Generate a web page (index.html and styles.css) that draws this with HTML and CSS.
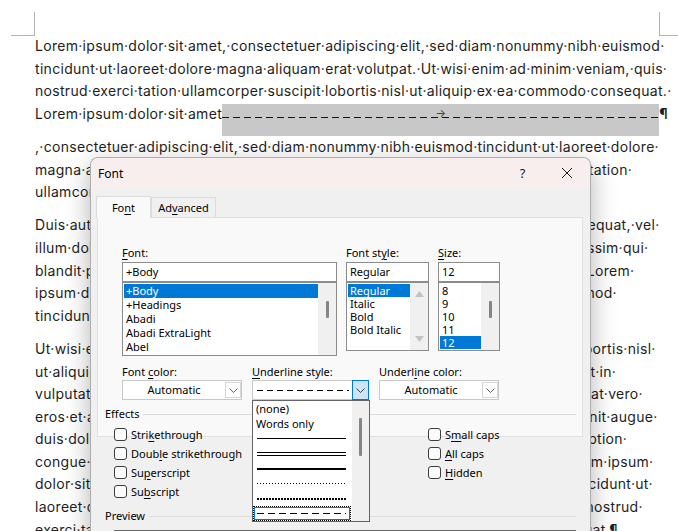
FILE: index.html
```html
<!DOCTYPE html>
<html>
<head>
<meta charset="utf-8">
<link rel="stylesheet" href="styles.css">
</head>
<body>
<div class="marks"><div class="mark-l"></div><div class="mark-r"></div></div>
<div class="doc">
  <p>
    <span class="ln">Lorem·ipsum·dolor·sit·amet,·consectetuer·adipiscing·elit,·sed·diam·nonummy·nibh·euismod·</span>
    <span class="ln">tincidunt·ut·laoreet·dolore·magna·aliquam·erat·volutpat.·Ut·wisi·enim·ad·minim·veniam,·quis·</span>
    <span class="ln">nostrud·exerci·tation·ullamcorper·suscipit·lobortis·nisl·ut·aliquip·ex·ea·commodo·consequat.·</span>
    <span class="ln ln-tab"><span>Lorem·ipsum·dolor·sit·amet</span><span class="tabchar">→</span><span class="pil">¶</span></span>
  </p>
  <p>
    <span class="ln">,·consectetuer·adipiscing·elit,·sed·diam·nonummy·nibh·euismod·tincidunt·ut·laoreet·dolore·</span>
    <span class="ln">magna·aliquam·erat·volutpat.·Ut·wisi·enim·ad·minim·veniam,·quis·nostrud·exerci·tation·</span>
    <span class="ln">ullamcorper·suscipit·lobortis·nisl·ut·aliquip·ex·ea·commodo·consequat.¶</span>
  </p>
  <p>
    <span class="ln">Duis·autem·vel·eum·iriure·dolor·in·hendrerit·in·vulputate·velit·esse·molestie·consequat,·vel·</span>
    <span class="ln">illum·dolore·eu·feugiat·nulla·facilisis·at·vero·eros·et·accumsan·et·iusto·odio·dignissim·qui·</span>
    <span class="ln">blandit·praesent·luptatum·zzril·delenit·augue·duis·dolore·te·feugait·nulla·facilisi.·Lorem·</span>
    <span class="ln">ipsum·dolor·sit·amet,·consectetuer·adipiscing·elit,·sed·diam·nonummy·nibh·euismod·</span>
    <span class="ln">tincidunt·ut·laoreet·dolore·magna·aliquam·erat·volutpat.¶</span>
  </p>
  <p>
    <span class="ln">Ut·wisi·enim·ad·minim·veniam,·quis·nostrud·exerci·tation·ullamcorper·suscipit·lobortis·nisl·</span>
    <span class="ln">ut·aliquip·ex·ea·commodo·consequat.·Duis·autem·vel·eum·iriure·dolor·in·hendrerit·in·</span>
    <span class="ln">vulputate·velit·esse·molestie·consequat,·vel·illum·dolore·eu·feugiat·nulla·facilisis·at·vero·</span>
    <span class="ln">eros·et·accumsan·et·iusto·odio·dignissim·qui·blandit·praesent·luptatum·zzril·delenit·augue·</span>
    <span class="ln">duis·dolore·te·feugait·nulla·facilisi.·Nam·liber·tempor·cum·soluta·nobis·eleifend·option·</span>
    <span class="ln">congue·nihil·imperdiet·doming·id·quod·mazim·placerat·facer·possim·assum.·Lorem·ipsum·</span>
    <span class="ln">dolor·sit·amet,·consectetuer·adipiscing·elit,·sed·diam·nonummy·nibh·euismod·tincidunt·ut·</span>
    <span class="ln">laoreet·dolore·magna·aliquam·erat·volutpat.·Ut·wisi·enim·ad·minim·veniam,·quis·nostrud·</span>
    <span class="ln">exerci·tation·ullamcorper·suscipit·lobortis·nisl·ut·aliquip·ex·ea·commodo·consequat.¶</span>
  </p>
</div>

<div class="dialog">
  <div class="titlebar">
    <span class="title">Font</span>
    <span class="cap help">?</span>
    <span class="cap close"><svg width="10" height="10" viewBox="0 0 10 10"><path d="M0 0L10 10M10 0L0 10" stroke="#1a1a1a" stroke-width="1" fill="none"/></svg></span>
  </div>
  <div class="tabstrip">
    <div class="tabbtn active">Fo<u>n</u>t</div>
    <div class="tabbtn adv">Ad<u>v</u>anced</div>
  </div>
  <div class="panel">
    <div class="row1">
      <div class="field w-font">
        <div class="lbl"><u>F</u>ont:</div>
        <div class="input">+Body</div>
        <div class="list h-font">
          <div class="items r14">
            <div class="it sel">+Body</div>
            <div class="it">+Headings</div>
            <div class="it">Abadi</div>
            <div class="it">Abadi ExtraLight</div>
            <div class="it">Abel</div>
          </div>
          <div class="sb"><div class="thumb"></div></div>
        </div>
      </div>
      <div class="field w-style">
        <div class="lbl">Font st<u>y</u>le:</div>
        <div class="input">Regular</div>
        <div class="list h-small">
          <div class="items r13">
            <div class="it sel">Regular</div>
            <div class="it">Italic</div>
            <div class="it">Bold</div>
            <div class="it">Bold Italic</div>
          </div>
          <div class="sb sb-arrows">
            <svg width="9" height="6" viewBox="0 0 9 6"><path d="M0 6L4.5 0L9 6Z" fill="#c2c2c2"/></svg>
            <svg width="9" height="6" viewBox="0 0 9 6"><path d="M0 0L4.5 6L9 0Z" fill="#c2c2c2"/></svg>
          </div>
        </div>
      </div>
      <div class="field w-size">
        <div class="lbl"><u>S</u>ize:</div>
        <div class="input">12</div>
        <div class="list h-small">
          <div class="items r13">
            <div class="it">8</div>
            <div class="it">9</div>
            <div class="it">10</div>
            <div class="it">11</div>
            <div class="it sel">12</div>
          </div>
          <div class="sb"><div class="thumb"></div></div>
        </div>
      </div>
    </div>

    <div class="row2">
      <div class="field w-color">
        <div class="lbl">Font <u>c</u>olor:</div>
        <div class="combo">
          <span class="combo-val">Automatic</span>
          <span class="arrow"><svg width="9" height="5" viewBox="0 0 9 5"><path d="M.5.5L4.5 4.5L8.5.5" fill="none" stroke="#606060"/></svg></span>
        </div>
      </div>
      <div class="field w-ustyle">
        <div class="lbl"><u>U</u>nderline style:</div>
        <div class="combo">
          <span class="combo-val"><span class="dash-sample"></span></span>
          <span class="arrow open"><svg width="9" height="5" viewBox="0 0 9 5"><path d="M.5.5L4.5 4.5L8.5.5" fill="none" stroke="#404040"/></svg></span>
        </div>
      </div>
      <div class="field w-color">
        <div class="lbl">Underl<u>i</u>ne color:</div>
        <div class="combo">
          <span class="combo-val">Automatic</span>
          <span class="arrow"><svg width="9" height="5" viewBox="0 0 9 5"><path d="M.5.5L4.5 4.5L8.5.5" fill="none" stroke="#606060"/></svg></span>
        </div>
      </div>
    </div>

    <div class="group"><span>Effects</span><span class="rule"></span></div>
    <div class="effects">
      <label class="chk"><span class="box"></span>Stri<u>k</u>ethrough</label>
      <label class="chk"><span class="box"></span>S<u>m</u>all caps</label>
      <label class="chk"><span class="box"></span>Doub<u>l</u>e strikethrough</label>
      <label class="chk"><span class="box"></span><u>A</u>ll caps</label>
      <label class="chk"><span class="box"></span>Su<u>p</u>erscript</label>
      <label class="chk"><span class="box"></span><u>H</u>idden</label>
      <label class="chk"><span class="box"></span>Su<u>b</u>script</label>
    </div>
    <div class="group g-prev"><span>Preview</span><span class="rule"></span></div>
    <div class="preview"></div>
  </div>

  <div class="droplist">
    <div class="dl-items">
      <div class="dl-it">(none)</div>
      <div class="dl-it">Words only</div>
      <div class="dl-it"><span class="smp solid"></span></div>
      <div class="dl-it"><span class="smp double"></span></div>
      <div class="dl-it"><span class="smp thick"></span></div>
      <div class="dl-it"><span class="smp dotted"></span></div>
      <div class="dl-it"><span class="smp bdotted"></span></div>
      <div class="dl-it cur"><span class="smp dashed"></span></div>
    </div>
    <div class="dl-sb"><div class="thumb long"></div></div>
  </div>
</div>
</body>
</html>
```

FILE: styles.css
```css
* { box-sizing: border-box; }
html, body { margin: 0; padding: 0; }
body {
  width: 678px;
  height: 531px;
  overflow: hidden;
  background: #fff;
  position: relative;
  font-family: Inter, "Noto Sans", sans-serif;
}

.marks { display: flex; justify-content: space-between; height: 36px; margin-bottom: -1px; }
.mark-l { width: 24px; height: 24px; margin: 12px 0 0 11px; border-right: 1px solid #b4b4b4; border-bottom: 1px solid #b4b4b4; }
.mark-r { width: 19px; height: 24px; margin-top: 12px; border-left: 1px solid #b4b4b4; border-bottom: 1px solid #b4b4b4; }

.doc {
  margin-left: 35px;
  width: 624px;
  color: #1e1e1e;
  font-size: 14px;
  letter-spacing: 0.3px;
  line-height: 22.6px;
}
.doc p { margin: 0 0 10.6px; }
.ln { display: block; white-space: nowrap; }
.ln-tab { display: flex; align-items: flex-start; }
.tabchar {
  flex: 1;
  height: 32px;
  margin: 1.5px 0 -11.5px;
  background-color: #c8c8c8;
  background-image: repeating-linear-gradient(90deg, #111 0 7px, transparent 7px 11px);
  background-size: 100% 1px;
  background-position: 0 13px;
  background-repeat: no-repeat;
  text-align: center;
  font-size: 11px;
  letter-spacing: 0;
  line-height: 18px;
  color: #444;
}
.pil { margin-right: -9px; font-weight: 600; }

/* dialog */
.dialog {
  position: absolute;
  left: 90px;
  top: 157px;
  width: 501px;
  height: 400px;
  background: #f0f0f0;
  border: 1px solid rgba(0,0,0,.28);
  border-radius: 8px 8px 0 0;
  box-shadow: 0 8px 26px rgba(0,0,0,.30);
  font-family: "Noto Sans", sans-serif;
  font-size: 11px;
  color: #000;
}
u { text-decoration-thickness: 1px; text-underline-offset: 1.5px; }

.titlebar {
  height: 30px;
  display: flex;
  align-items: center;
  background: #f9eeee;
  border-radius: 7px 7px 0 0;
  padding-left: 7px;
  font-size: 12px;
}
.title { flex: 1; }
.cap { width: 46px; height: 30px; display: flex; align-items: center; justify-content: center; }
.help { font-size: 13px; color: #1a1a1a; padding-left: 3px; }

.tabstrip { height: 29px; display: flex; align-items: flex-end; padding-left: 5px; }
.tabbtn {
  height: 20px;
  border: 1px solid #dcdcdc;
  border-bottom: none;
  background: #f0f0f0;
  line-height: 19px;
  text-align: center;
}
.tabbtn.active { width: 55px; height: 22px; margin-bottom: -1px; background: #f9f9f9; position: relative; z-index: 1; line-height: 21px; }
.tabbtn.adv { width: 65px; }

.panel {
  margin-left: 6px;
  width: 486px;
  height: 220px;
  background: #f9f9f9;
  border: 1px solid #e0e0e0;
  padding-top: 28px;
}

.row1 { display: flex; gap: 9px; padding-left: 24px; align-items: flex-start; }
.w-font { width: 215px; }
.w-style { width: 83px; }
.w-size { width: 62px; }
.lbl { line-height: 14px; margin-bottom: 2px; white-space: nowrap; }
.input {
  height: 20px;
  border: 1px solid #8c8c8c;
  background: #fff;
  padding-left: 3px;
  line-height: 18px;
}
.list {
  display: flex;
  border: 1px solid #8c8c8c;
  background: #fff;
}
.h-font { height: 74px; }
.h-small { height: 69px; }
.items { flex: 1; padding: 1px 0 0 1px; }
.it { padding-left: 2px; white-space: nowrap; }
.r14 .it { height: 14px; line-height: 14px; }
.r13 .it { height: 13px; line-height: 13px; }
.it.sel { background: #0078d7; color: #fff; }
.sb { width: 18px; background: #f0f0f0; display: flex; justify-content: center; padding-top: 18px; }
.thumb { width: 3px; height: 17px; background: #858585; border-radius: 1px; }
.sb-arrows { flex-direction: column; align-items: center; justify-content: space-between; padding: 8px 0 8px; }

.row2 { display: flex; gap: 10px; padding-left: 24px; margin-top: 9px; }
.w-color { width: 120px; }
.w-ustyle { width: 117px; }
.row2 .lbl { margin-bottom: 1px; }
.combo {
  height: 20px;
  display: flex;
  border: 1px solid #c8c8c8;
  background: #fff;
}
.combo-val { flex: 1; text-align: center; line-height: 18px; display: flex; align-items: center; justify-content: center; }
.arrow {
  width: 16px;
  margin: 1px 0;
  border: 1px solid #d6d6d6;
  display: flex;
  align-items: center;
  justify-content: center;
}
.arrow.open { margin: -1px -1px -1px 0; width: 17px; border-color: #0078d7; background: #cce4f7; }
.w-ustyle .combo-val { justify-content: flex-start; padding-left: 4px; }
.dash-sample {
  display: block;
  width: 92px;
  height: 1px;
  background: repeating-linear-gradient(90deg, #000 0 6px, transparent 6px 10px);
}

.group { display: flex; align-items: center; gap: 4px; padding: 0 6px 0 7px; line-height: 14px; margin-top: 7px; }
.rule { flex: 1; height: 1px; background: #dcdcdc; }
.g-prev { margin-top: 8px; }

.effects { display: grid; grid-template-columns: 314px 1fr; padding-left: 16px; margin-top: 4px; }
.chk { display: flex; align-items: center; height: 19px; white-space: nowrap; }
.box {
  width: 13px;
  height: 13px;
  border: 1px solid #3c3c3c;
  border-radius: 3px;
  background: #fbfbfb;
  margin-right: 4px;
}
.preview { margin: 7px 6px 0 16px; height: 60px; border-top: 1px solid #6a6a6a; }

/* dropdown list (open) */
.droplist {
  position: absolute;
  left: 161px;
  top: 242px;
  width: 118px;
  height: 122px;
  display: flex;
  background: #fff;
  border: 1px solid #646464;
  z-index: 5;
}
.dl-items { width: 99px; }
.dl-it { height: 15px; line-height: 15px; padding-left: 3px; display: flex; align-items: center; white-space: nowrap; }
.smp { display: block; width: 89px; margin-left: 1px; }
.solid { height: 1px; background: #000; }
.double { height: 4px; border-top: 1px solid #000; border-bottom: 1px solid #000; }
.thick { height: 2px; background: #000; }
.dotted { height: 1px; background: repeating-linear-gradient(90deg, #000 0 1px, transparent 1px 3px); }
.bdotted { height: 2px; background: repeating-linear-gradient(90deg, #000 0 2px, transparent 2px 3px); }
.dashed { height: 1px; background: repeating-linear-gradient(90deg, #000 0 7px, transparent 7px 11px); }
.dl-it.cur { border: 1px dotted #000; box-shadow: inset 0 0 0 1px #0078d7; padding-left: 2px; margin-right: 1px; }
.dl-sb { flex: 1; background: #f0f0f0; display: flex; justify-content: center; padding-top: 17px; }
.thumb.long { height: 38px; }
```
